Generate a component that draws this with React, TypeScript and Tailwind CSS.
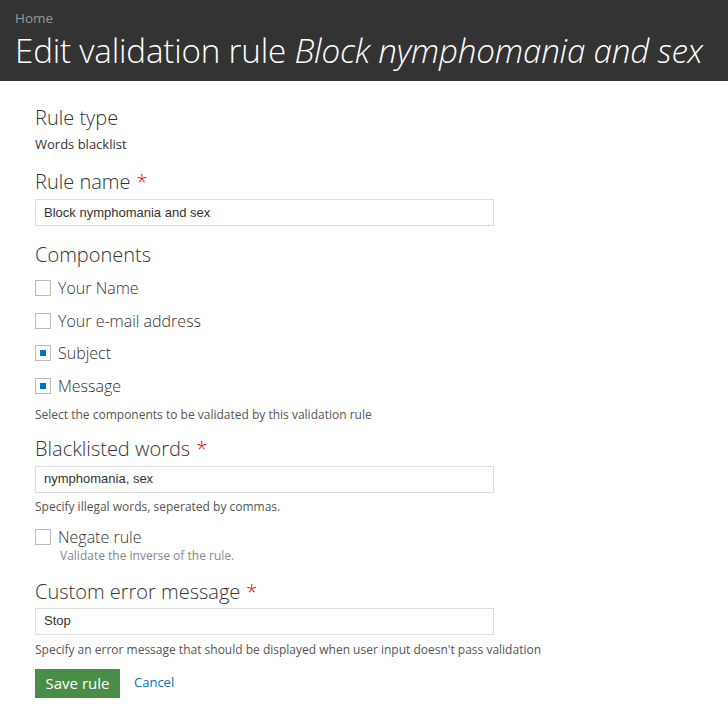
const openSans = "font-['Open_Sans',sans-serif]"
const arial = "font-['Liberation_Sans',Arial,sans-serif]"

const Heading = ({ children, required }: { children: string; required?: boolean }) => (
  <h2 className={`${openSans} text-[20px] font-light leading-[26px] text-[#333]`}>
    {children}
    {required && <span className="text-[#e00] ml-[6px]">*</span>}
  </h2>
)

const TextInput = ({ value }: { value: string }) => (
  <div className={`${arial} w-[459px] h-[27px] border border-[#ddd] px-[8px] flex items-center text-[13px] text-[#333]`}>
    {value}
  </div>
)

const Description = ({ children }: { children: string }) => (
  <p className={`${openSans} text-[12px] leading-[16px] text-[#555]`}>{children}</p>
)

const Checkbox = ({ label, checked }: { label: string; checked?: boolean }) => (
  <div className="flex items-center gap-[7px] h-[20px]">
    <div className="w-[16px] h-[16px] border border-[#bbb] flex items-center justify-center bg-white">
      {checked && <div className="w-[6px] h-[6px] bg-[#0074bd]" />}
    </div>
    <span className={`${openSans} font-light text-[16px] text-[#333]`}>{label}</span>
  </div>
)

export default function App() {
  return (
    <div className="w-[728px] min-h-[725px] bg-white">
      <header className="bg-[#333] h-[81px] px-[15px] pt-[8px]">
        <a className={`${openSans} text-[13.5px] text-[#999] leading-[20px] block`}>Home</a>
        <h1 className={`${openSans} font-light text-[33.2px] leading-[42px] text-white tracking-[-0.2px] mt-[2px] whitespace-nowrap`}>
          Edit validation rule <em className="italic">Block nymphomania and sex</em>
        </h1>
      </header>

      <main className="px-[35px] pt-[24px]">
        <section>
          <Heading>Rule type</Heading>
          <p className={`${openSans} text-[13px] text-[#333] mt-[4px] leading-[18px]`}>Words blacklist</p>
        </section>

        <section className="mt-[16px]">
          <Heading required>Rule name</Heading>
          <div className="mt-[4px]">
            <TextInput value="Block nymphomania and sex" />
          </div>
        </section>

        <section className="mt-[16px]">
          <Heading>Components</Heading>
          <div className="flex flex-col gap-[12.5px] mt-[10px]">
            <Checkbox label="Your Name" />
            <Checkbox label="Your e-mail address" />
            <Checkbox label="Subject" checked />
            <Checkbox label="Message" checked />
          </div>
          <div className="mt-[11px]">
            <Description>Select the components to be validated by this validation rule</Description>
          </div>
        </section>

        <section className="mt-[13px]">
          <Heading required>Blacklisted words</Heading>
          <div className="mt-[4px]">
            <TextInput value="nymphomania, sex" />
          </div>
          <div className="mt-[6px]">
            <Description>Specify illegal words, seperated by commas.</Description>
          </div>
        </section>

        <section className="mt-[12px]">
          <Checkbox label="Negate rule" />
          <p className={`${openSans} text-[12px] leading-[16px] text-[#888] ml-[25px] mt-[1px]`}>Validate the inverse of the rule.</p>
        </section>

        <section className="mt-[15px]">
          <Heading required>Custom error message</Heading>
          <div className="mt-[3px]">
            <TextInput value="Stop" />
          </div>
          <div className="mt-[7px]">
            <Description>Specify an error message that should be displayed when user input doesn't pass validation</Description>
          </div>
        </section>

        <div className="flex items-center gap-[14px] mt-[11px]">
          <button className={`${openSans} bg-[#4a8d49] text-white text-[15px] h-[29px] w-[85px]`}>Save rule</button>
          <a className={`${openSans} text-[13px] text-[#0074bd]`}>Cancel</a>
        </div>
      </main>
    </div>
  )
}
